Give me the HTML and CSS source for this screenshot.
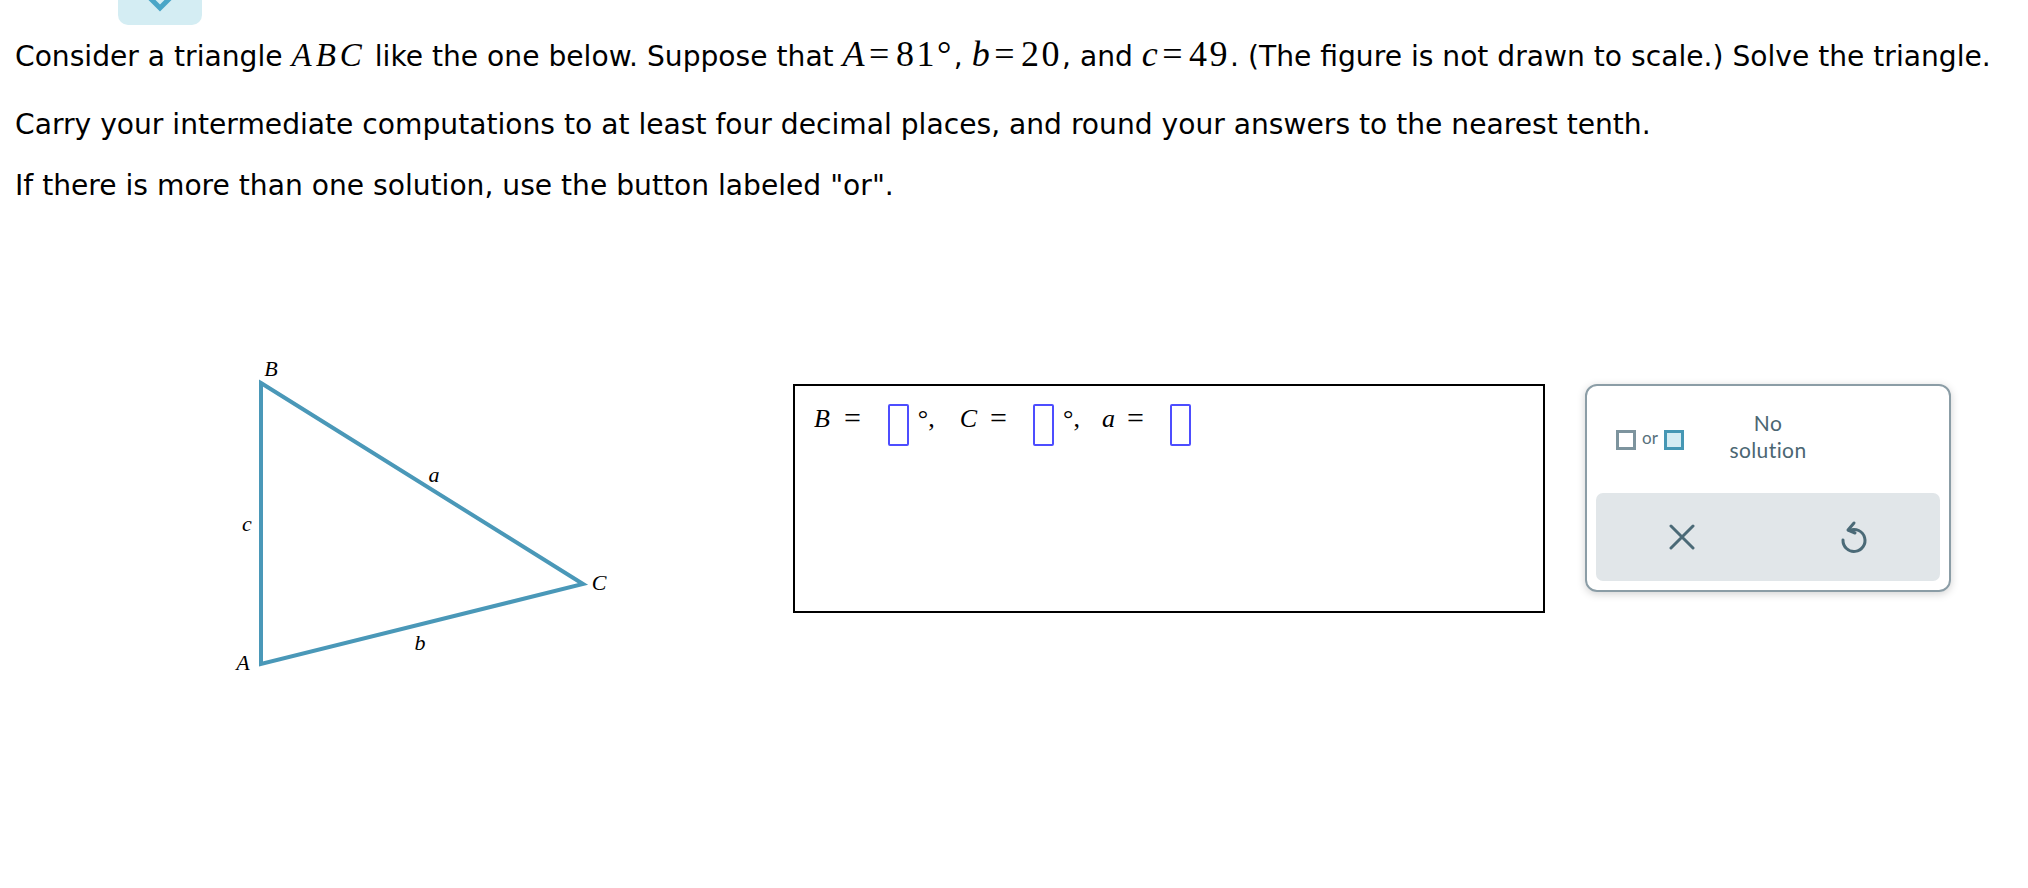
FILE: index.html
```html
<!DOCTYPE html>
<html>
<head>
<meta charset="utf-8">
<link rel="stylesheet" href="styles.css">
</head>
<body>
<div class="tab">
  <svg class="chev" width="84" height="25" viewBox="0 0 84 25"><polyline points="31,-3 42,8 53,-3" fill="none" stroke="#4aa6c7" stroke-width="5" stroke-linejoin="miter"/></svg>
</div>
<div class="question">
  <p class="l1">Consider a triangle <span class="m abc">ABC</span> like the one below. Suppose that <span class="m v">A<span class="eq">=</span><span class="n">81°</span></span>, <span class="m v">b<span class="eq">=</span><span class="n">20</span></span>, and <span class="m v">c<span class="eq">=</span><span class="n">49</span></span>. (The figure is not drawn to scale.) Solve the triangle.</p>
  <p class="l2">Carry your intermediate computations to at least four decimal places, and round your answers to the nearest tenth.</p>
  <p class="l3">If there is more than one solution, use the button labeled "or".</p>
</div>
<div class="work">
  <svg class="figure" width="450" height="340" viewBox="0 0 450 340">
    <polygon points="61,43 383,244 61,324" fill="none" stroke="#4a98b8" stroke-width="4" stroke-linejoin="miter" stroke-miterlimit="3"/>
    <g class="lbl">
      <text x="71" y="36" text-anchor="middle">B</text>
      <text x="234" y="142" text-anchor="middle">a</text>
      <text x="47" y="191" text-anchor="middle">c</text>
      <text x="399" y="250" text-anchor="middle">C</text>
      <text x="220" y="310" text-anchor="middle">b</text>
      <text x="43" y="330" text-anchor="middle">A</text>
    </g>
  </svg>
  <div class="answer">
    <div class="mrow">
      <span class="t it mB">B</span><span class="t op o1">=</span><span class="inp i1"></span><span class="t deg">°,</span><span class="t it mC">C</span><span class="t op o2">=</span><span class="inp i2"></span><span class="t deg">°,</span><span class="t it ma">a</span><span class="t op o3">=</span><span class="inp i3"></span>
    </div>
  </div>
  <div class="panel">
    <div class="top">
      <div class="orw"><span class="sq g"></span><span class="ortxt">or</span><span class="sq b"></span></div>
      <div class="nosol">No<br>solution</div>
      <div></div>
    </div>
    <div class="tools">
      <div class="btn"><svg width="26" height="26" viewBox="0 0 26 26"><path d="M2 2 L24 24 M24 2 L2 24" stroke="#4b6a77" stroke-width="3" stroke-linecap="round"/></svg></div>
      <div class="btn"><svg width="30" height="36" viewBox="0 0 30 36"><path d="M10.5 11.4 A11 11 0 1 1 4 21" fill="none" stroke="#4b6a77" stroke-width="3" stroke-linecap="round"/><path d="M15 4 L9 11 L16 14" fill="none" stroke="#4b6a77" stroke-width="3" stroke-linecap="round" stroke-linejoin="round"/></svg></div>
    </div>
  </div>
</div>
</body>
</html>
```
FILE: styles.css
```css
html, body { margin: 0; padding: 0; background: #fff; }
body { font-family: "DejaVu Sans", Verdana, sans-serif; font-size: 28.15px; color: #000; }

.tab {
  margin-left: 118px;
  width: 84px;
  height: 25px;
  background: #d4edf3;
  border-radius: 0 0 10px 10px;
  overflow: hidden;
}
.chev { display: block; }

.question { padding-left: 15px; }
.question p { margin: 0; line-height: 34px; }
.l1 { margin-top: 15px !important; white-space: nowrap; }
.l2 { margin-top: 34px !important; }
.l3 { margin-top: 27px !important; }

.m { font-family: "Liberation Serif", "Times New Roman", serif; font-style: italic; font-size: 33px; line-height: 20px; }
.m.abc { letter-spacing: 4px; }
.m.v { font-size: 36px; letter-spacing: 2.5px; }
.m .n { font-style: normal; }
.m .eq { font-style: normal; margin: 0 4px 0 2px; }

.work {
  display: flex;
  align-items: flex-start;
  margin-top: 137px;
  padding-left: 200px;
}
.figure { display: block; flex: none; }
.lbl text { font-family: "Liberation Serif", "Times New Roman", serif; font-style: italic; font-size: 22px; fill: #000; }

.answer {
  margin-left: 143px;
  margin-top: 44px;
  width: 748px;
  height: 225px;
  border: 2px solid #000;
  flex: none;
}
.mrow { display: flex; align-items: flex-start; padding: 18px 0 0 19px; }
.t { font-family: "Liberation Serif", "Times New Roman", serif; font-size: 26px; line-height: 26px; padding-top: 2px; flex: none; }
.t.op { font-size: 30px; padding-top: 1px; }
.it { font-style: italic; }
.o1 { margin-left: 14px; }
.o2 { margin-left: 13px; }
.o3 { margin-left: 12px; }
.inp { width: 17px; height: 38px; border: 2px solid #4d4dff; border-radius: 2px; flex: none; }
.i1 { margin-left: 27px; }
.i2 { margin-left: 26px; }
.i3 { margin-left: 26px; }
.deg { margin-left: 9px; }
.mC { margin-left: 25px; }
.ma { margin-left: 22px; }

.panel {
  margin-left: 40px;
  margin-top: 44px;
  width: 344px;
  height: 195px;
  border: 2px solid #8b9da6;
  border-radius: 12px;
  box-shadow: 0 2px 8px rgba(0,0,0,0.18);
  padding: 0 9px 9px;
  display: flex;
  flex-direction: column;
  flex: none;
}
.top {
  height: 107px;
  display: grid;
  grid-template-columns: 1fr 1fr 1fr;
  align-items: center;
}
.orw { display: flex; align-items: center; padding-left: 20px; }
.sq { width: 14px; height: 14px; border: 3px solid #7d949e; display: block; }
.sq.b { border-color: #4597b4; background: #d4ecf3; }
.ortxt { font-family: Lato, "Open Sans", sans-serif; font-size: 17px; color: #57707b; margin: 0 6px; line-height: 20px; padding-bottom: 3px; }
.nosol { font-family: Lato, "Open Sans", sans-serif; font-size: 21px; letter-spacing: 0.4px; line-height: 27px; color: #4b6672; text-align: center; padding-bottom: 8px; }

.tools {
  flex: 1;
  background: #e1e6e9;
  border-radius: 7px;
  display: grid;
  grid-template-columns: 1fr 1fr;
  align-items: center;
  justify-items: center;
}
.btn { display: flex; align-items: center; justify-content: center; }
.btn svg { display: block; }
```
